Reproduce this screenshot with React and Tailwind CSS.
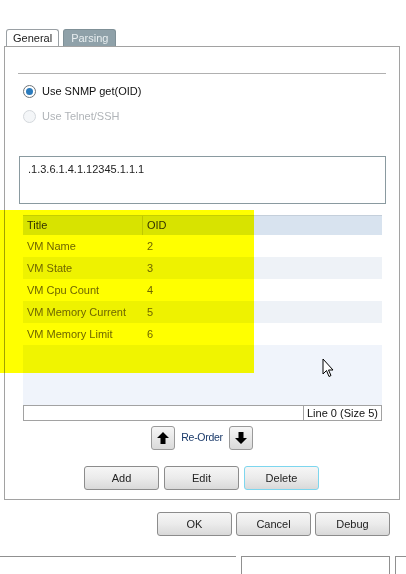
import React from 'react';

const rows = [
  { title: 'VM  Name', oid: '2' },
  { title: 'VM State', oid: '3' },
  { title: 'VM Cpu Count', oid: '4' },
  { title: 'VM Memory Current', oid: '5' },
  { title: 'VM Memory Limit', oid: '6' },
];

const Btn = ({ children, focused }) => (
  <button
    className={`w-[75px] h-[24px] shrink-0 rounded-[3px] border bg-gradient-to-b from-[#f6f6f6] via-[#ebebeb] to-[#d9d9d9] text-[11px] text-[#222] ${
      focused ? 'border-[#7dd6ee]' : 'border-[#8c8c8c]'
    }`}
  >
    {children}
  </button>
);

const ArrowBtn = ({ down }) => (
  <button className="w-[24px] h-[24px] rounded-[3px] border border-[#9a9a9a] bg-gradient-to-b from-[#f6f6f6] to-[#dadada] flex items-center justify-center">
    <svg width="14" height="14" viewBox="0 0 14 14">
      {down ? (
        <path d="M4.5 1h5v6h3.5L7 13 1 7h3.5z" fill="#000" />
      ) : (
        <path d="M4.5 13h5V7h3.5L7 1 1 7h3.5z" fill="#000" />
      )}
    </svg>
  </button>
);

const Radio = ({ checked, disabled, label }) => (
  <div className="flex items-center h-[16px]">
    <span
      className={`w-[13px] h-[13px] rounded-full border flex items-center justify-center ${
        disabled ? 'border-[#d4d8dc] bg-[#f4f6f8]' : 'border-[#6e7478] bg-white'
      }`}
    >
      {checked && <span className="w-[7px] h-[7px] rounded-full bg-[#2b7bbd]" />}
    </span>
    <span className={`ml-[6px] text-[11px] ${disabled ? 'text-[#b0b4b8]' : 'text-[#111]'}`}>{label}</span>
  </div>
);

export default function App() {
  return (
    <div
      className="relative w-[406px] h-[574px] bg-white overflow-hidden"
      style={{ fontFamily: '"Liberation Sans", Arial, sans-serif' }}
    >
      {/* tabs */}
      <div className="flex items-end gap-[4px] pl-[6px] pt-[29px] h-[46px]">
        <div className="h-[17px] px-[6px] border border-b-0 border-[#9aa0a4] rounded-t-[3px] bg-white text-[11px] text-[#222] leading-[16px]">
          General
        </div>
        <div className="h-[17px] px-[7px] border border-b-0 border-[#7f9097] rounded-t-[3px] bg-[#8fa1a9] text-[11px] text-[#e8eef0] leading-[16px]">
          Parsing
        </div>
      </div>

      {/* panel */}
      <div className="ml-[4px] w-[396px] h-[454px] border border-[#a2a2a2] flex flex-col">
        <div className="mt-[26px] mx-[13px] h-px bg-[#b0b0b0]" />
        <div className="ml-[18px] mt-[9px] flex flex-col gap-[9px]">
          <Radio checked label="Use SNMP get(OID)" />
          <Radio disabled label="Use Telnet/SSH" />
        </div>

        <div className="mt-[32px] ml-[14px] w-[367px] h-[48px] border border-[#8a9aa0] px-[8px] pt-[4px] text-[11px] text-[#222]">
          .1.3.6.1.4.1.12345.1.1.1
        </div>

        {/* table */}
        <div className="mt-[11px] ml-[18px] w-[359px] flex flex-col">
          <div className="flex h-[20px] bg-[#d8e3ef] border-t border-[#c4cfdb] text-[11px] text-[#333] leading-[19px]">
            <div className="w-[120px] pl-[4px] border-r border-[#c0c8d0]">Title</div>
            <div className="pl-[4px]">OID</div>
          </div>
          {rows.map((r, i) => (
            <div
              key={r.oid}
              className={`flex h-[22px] items-center text-[11px] text-[#6f6652] ${i % 2 ? 'bg-[#eef2f7]' : 'bg-white'}`}
            >
              <div className="w-[120px] pl-[4px]">{r.title}</div>
              <div className="pl-[4px]">{r.oid}</div>
            </div>
          ))}
          <div className="h-[60px] bg-[#f0f4fb]" />
          <div className="flex h-[16px] border border-[#a2a2a2] text-[11px] text-[#111] leading-[14px]">
            <div className="flex-1 border-r border-[#a2a2a2]" />
            <div className="w-[77px] pl-[3px]">Line 0 (Size 5)</div>
          </div>
        </div>

        <div className="mt-[5px] flex items-center justify-center gap-[6px]">
          <ArrowBtn />
          <span className="text-[10.5px] text-[#1a3a6a] tracking-[-0.3px]">Re-Order</span>
          <ArrowBtn down />
        </div>

        <div className="mt-[16px] flex gap-[5px] pl-[79px]">
          <Btn>Add</Btn>
          <Btn>Edit</Btn>
          <Btn focused>Delete</Btn>
        </div>
      </div>

      {/* dialog buttons */}
      <div className="mt-[12px] flex gap-[4px] pl-[157px]">
        <Btn>OK</Btn>
        <Btn>Cancel</Btn>
        <Btn>Debug</Btn>
      </div>

      {/* bottom strip */}
      <div className="mt-[20px] flex gap-[5px] h-[30px]">
        <div className="w-[236px] shrink-0 border-t border-[#909090]" />
        <div className="w-[149px] shrink-0 border border-b-0 border-[#909090]" />
        <div className="w-[20px] shrink-0 border border-b-0 border-r-0 border-[#909090]" />
      </div>

      {/* highlighter mark */}
      <div className="absolute left-0 top-[210px] w-[254px] h-[163px] bg-[#ffff00] mix-blend-multiply pointer-events-none" />

      {/* mouse pointer */}
      <svg className="absolute left-[322px] top-[358px]" width="13" height="20" viewBox="0 0 13 20">
        <path d="M1 1v15l3.5-3.5 2.5 6 2-1-2.5-5.5H11z" fill="#fff" stroke="#000" strokeWidth="1" strokeLinejoin="round" />
      </svg>
    </div>
  );
}
